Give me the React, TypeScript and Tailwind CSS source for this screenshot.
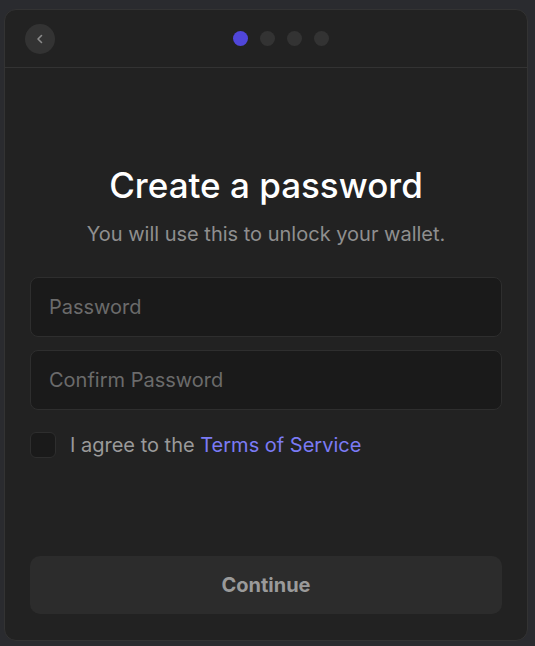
import React from "react";

export default function App() {
  return (
    <div
      className="w-[535px] h-[646px] bg-[#2a2b2f] pl-[4px] pt-[9px]"
      style={{ fontFamily: "Inter, 'Noto Sans', sans-serif" }}
    >
      <div className="w-[524px] h-[632px] rounded-[12px] border border-[#333333] bg-[#222222] flex flex-col">
        <div className="h-[58px] border-b border-[#333333] flex items-center pl-[20px]">
          <button className="w-[30px] h-[30px] rounded-full bg-[#333333] flex items-center justify-center">
            <svg width="10" height="10" viewBox="0 0 10 10" fill="none">
              <path d="M6.5 1.5 L3 5 L6.5 8.5" stroke="#8a8a8a" strokeWidth="1.6" strokeLinecap="round" strokeLinejoin="round" />
            </svg>
          </button>
          <div className="ml-[178px] flex items-center gap-[12px]">
            <div className="w-[15px] h-[15px] rounded-full bg-[#5046d9]" />
            <div className="w-[15px] h-[15px] rounded-full bg-[#333333]" />
            <div className="w-[15px] h-[15px] rounded-full bg-[#333333]" />
            <div className="w-[15px] h-[15px] rounded-full bg-[#333333]" />
          </div>
        </div>
        <div className="flex-1 flex flex-col px-[25px] pt-[96px] pb-[26px]">
          <h1 className="text-[35px] leading-[42px] font-medium text-white text-center">Create a password</h1>
          <p className="mt-[14px] text-[20px] leading-[28px] text-[#8f8f8f] text-center">
            You will use this to unlock your wallet.
          </p>
          <div className="mt-[29px] flex flex-col gap-[13px]">
            <input
              type="password"
              placeholder="Password"
              className="h-[60px] w-full rounded-[8px] border border-[#2e2e2e] bg-[#1a1a1a] px-[18px] text-[20px] text-white placeholder:text-[#6b6b6b] outline-none"
            />
            <input
              type="password"
              placeholder="Confirm Password"
              className="h-[60px] w-full rounded-[8px] border border-[#2e2e2e] bg-[#1a1a1a] px-[18px] text-[20px] text-white placeholder:text-[#6b6b6b] outline-none"
            />
          </div>
          <div className="mt-[22px] flex items-center gap-[14px]">
            <div className="w-[26px] h-[26px] rounded-[6px] border border-[#2e2e2e] bg-[#1a1a1a]" />
            <span className="text-[20px] leading-[26px] text-[#9a9a9a]">
              I agree to the <span className="text-[#7b7bf5]">Terms of Service</span>
            </span>
          </div>
          <button className="mt-auto h-[58px] w-full rounded-[10px] bg-[#2c2c2c] text-[20px] font-bold text-[#9a9a9a]">
            Continue
          </button>
        </div>
      </div>
    </div>
  );
}
